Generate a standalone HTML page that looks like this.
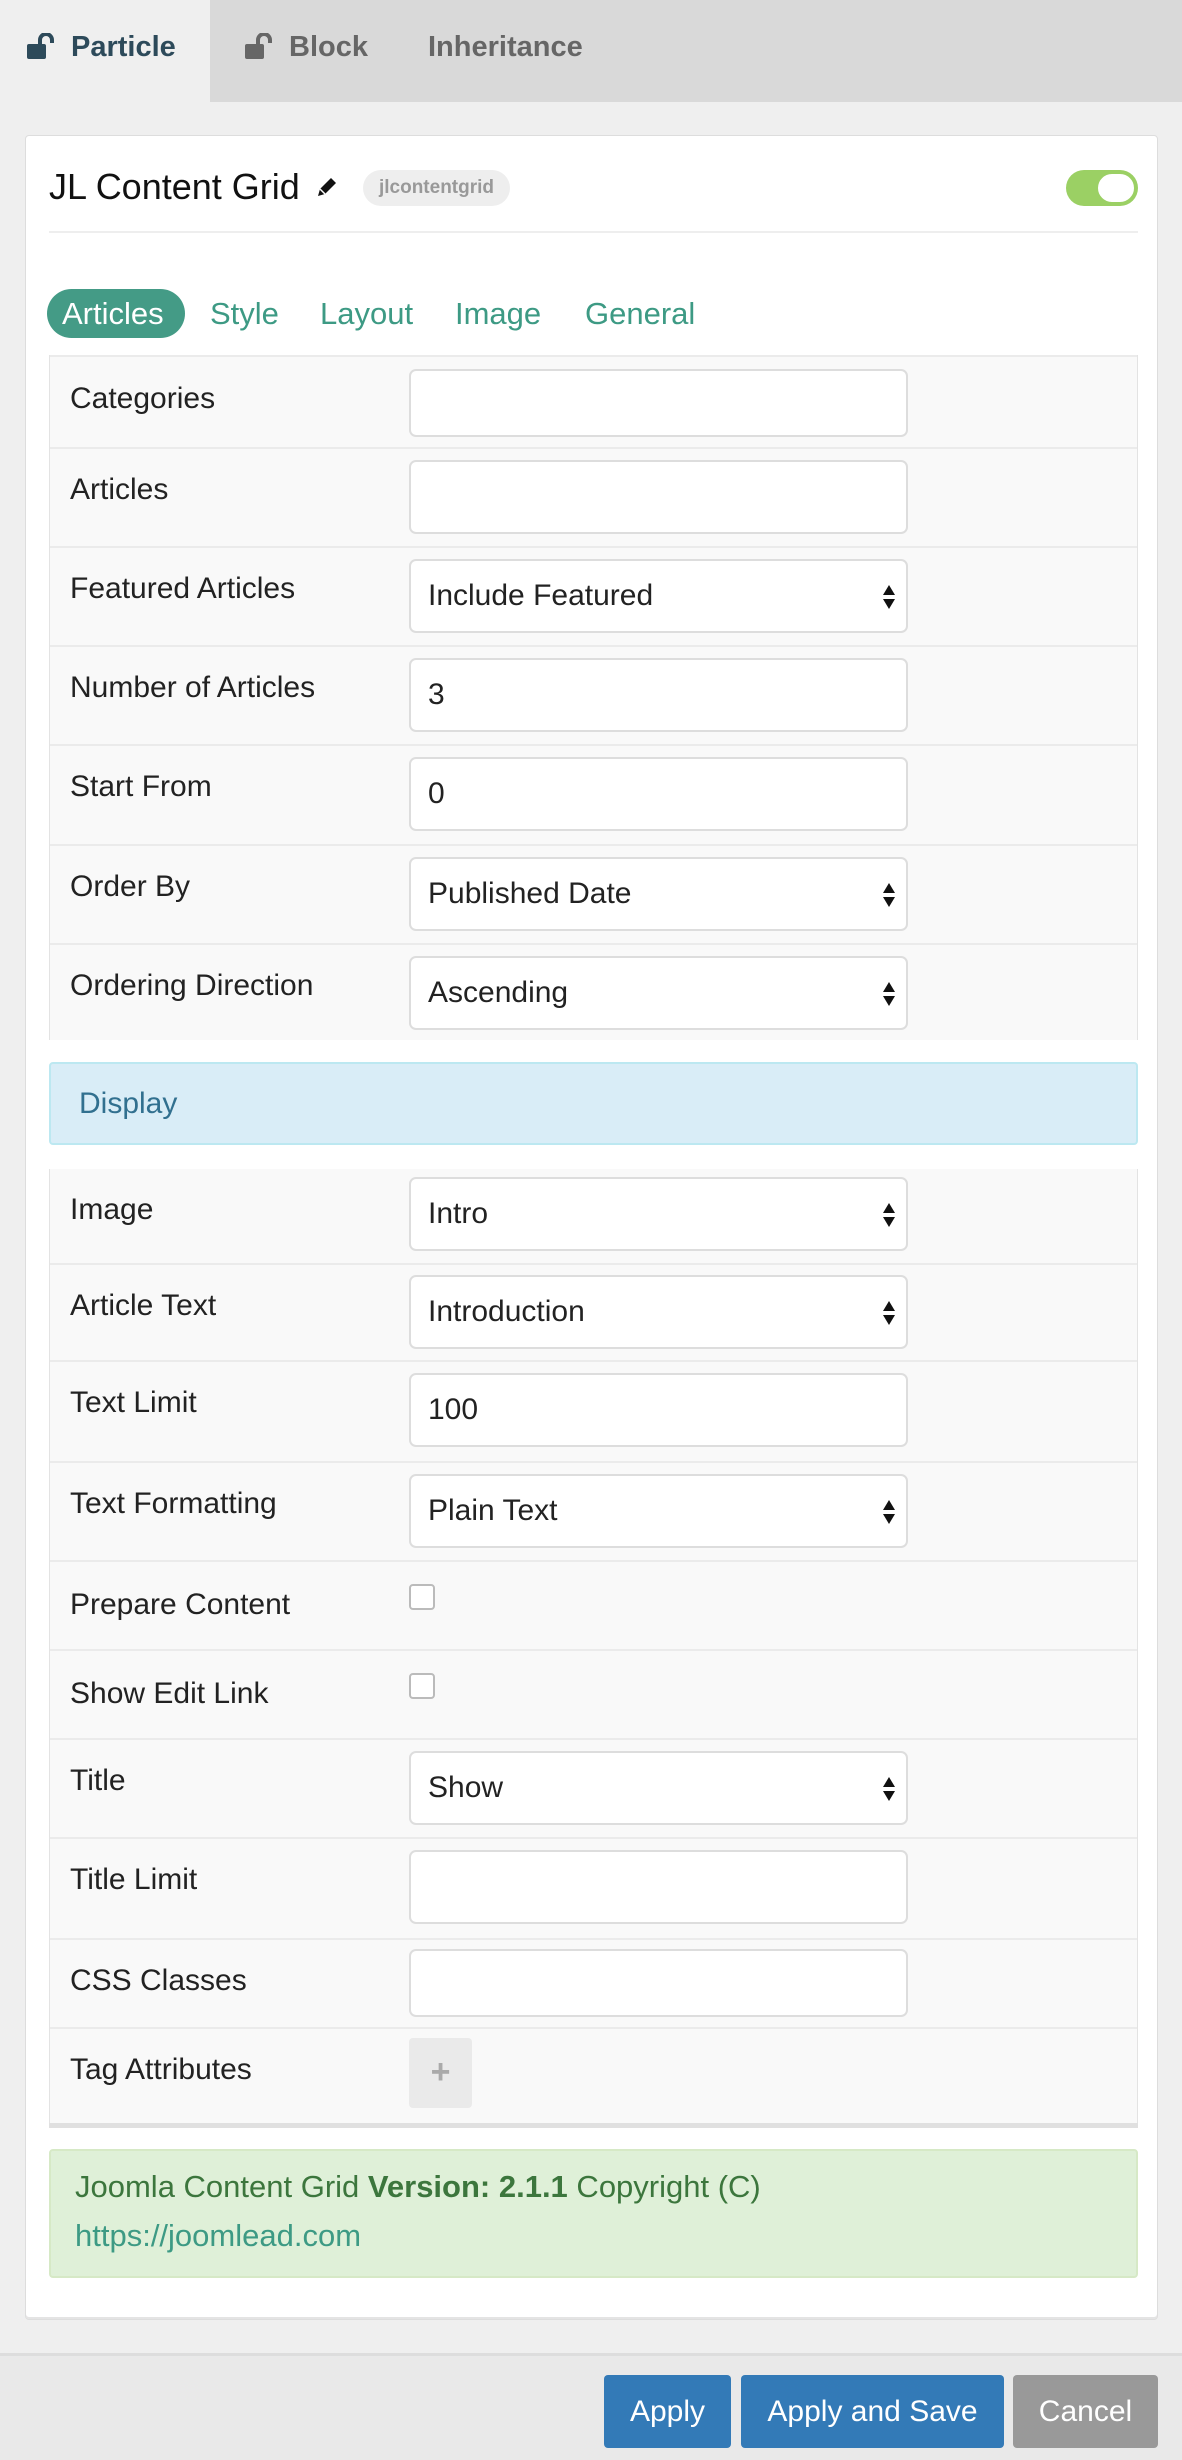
<!DOCTYPE html>
<html><head><meta charset="utf-8"><style>
*{box-sizing:border-box;margin:0;padding:0}
body{width:1182px;height:2460px;background:#efefef;font-family:"Liberation Sans",sans-serif;position:relative;overflow:hidden;color:#222}
.a{position:absolute}
.tabbar{left:0;top:0;width:1182px;height:102px;background:#d9d9d9}
.tab{top:0;height:102px;line-height:94px;font-size:29px;color:#666}
.card{left:25px;top:135px;width:1133px;height:2185px;background:#fff;border:1px solid #ddd;border-radius:4px;box-shadow:0 -2px 0 #e4e4e4 inset}
.fields{left:49px;width:1089px;background:#f9f9f9;border-left:1px solid #e3e3e3;border-right:1px solid #e3e3e3}
.row{position:absolute;left:0;width:100%;border-top:2px solid #ebebeb}
.lbl{position:absolute;left:20px;font-size:30px;color:#222}
.inp{position:absolute;left:359px;width:499px;height:74px;background:#fff;border:2px solid #ddd;border-radius:7px;font-size:30px;line-height:70px;padding-left:17px;color:#222}
.arr{position:absolute;right:10px;top:22px;width:14px;height:28px}
.cb{position:absolute;left:359px;width:26px;height:26px;border:2px solid #bbb;border-radius:4px;background:#fff}
.nav{top:289px;height:49px;line-height:49px;font-size:31px;color:#3d9a84}
.btn{top:2375px;height:73px;line-height:73px;color:#fff;font-size:30px;text-align:center;border-radius:4px}
</style></head><body>
<div class="a tabbar"></div>
<div class="a" style="left:0;top:0;width:210px;height:102px;background:#efefef"></div>
<svg class="a" style="left:27px;top:33px" width="32" height="26" viewBox="0 0 32 26"><rect x="0" y="11" width="19" height="15" rx="2" fill="#2d4a5a"/><path d="M13 12 V7 a6 6 0 0 1 12 0 V10" fill="none" stroke="#2d4a5a" stroke-width="4"/></svg>
<div class="a tab" style="left:71px;color:#2d4a5a;font-weight:bold">Particle</div>
<svg class="a" style="left:245px;top:33px" width="32" height="26" viewBox="0 0 32 26"><rect x="0" y="11" width="19" height="15" rx="2" fill="#666"/><path d="M13 12 V7 a6 6 0 0 1 12 0 V10" fill="none" stroke="#666" stroke-width="4"/></svg>
<div class="a tab" style="left:289px;font-weight:bold">Block</div>
<div class="a tab" style="left:428px;font-weight:bold">Inheritance</div>

<div class="a card"></div>
<div class="a" style="left:49px;top:164px;font-size:36px;line-height:46px;color:#111">JL Content Grid</div>
<svg class="a" style="left:315px;top:175px" width="24" height="24" viewBox="0 0 24 24"><path d="M3 21 L5 14 L16 3 L21 8 L10 19 Z" fill="#111"/><path d="M5 14 L10 19" stroke="#fff" stroke-width="1.5"/></svg>
<div class="a" style="left:363px;top:170px;width:147px;height:36px;border-radius:18px;background:#eee;color:#999;font-size:19px;font-weight:bold;line-height:36px;text-align:center">jlcontentgrid</div>
<div class="a" style="left:1066px;top:170px;width:72px;height:36px;border-radius:18px;background:#9bd064"></div>
<div class="a" style="left:1096px;top:172px;width:40px;height:32px;border-radius:16px;background:#fff;border:2px solid #9bd064"></div>
<div class="a" style="left:49px;top:231px;width:1089px;height:2px;background:#eee"></div>

<div class="a" style="left:47px;top:289px;width:138px;height:49px;border-radius:25px;background:#449b86"></div>
<div class="a nav" style="left:62px;color:#fff">Articles</div>
<div class="a nav" style="left:210px">Style</div>
<div class="a nav" style="left:320px">Layout</div>
<div class="a nav" style="left:455px">Image</div>
<div class="a nav" style="left:585px">General</div>

<div class="a fields" style="top:355px;height:685px">
 <div class="row" style="top:0;height:92px"><div class="lbl" style="top:25px">Categories</div><div class="inp" style="top:12px;height:68px"></div></div>
 <div class="row" style="top:92px;height:99px"><div class="lbl" style="top:24px">Articles</div><div class="inp" style="top:11px"></div></div>
 <div class="row" style="top:191px;height:99px"><div class="lbl" style="top:24px">Featured Articles</div><div class="inp" style="top:11px">Include Featured<svg class="arr" viewBox="0 0 14 28"><path d="M7 2 L13 12 H1Z M7 26 L13 16 H1Z" fill="#111"/></svg></div></div>
 <div class="row" style="top:290px;height:99px"><div class="lbl" style="top:24px">Number of Articles</div><div class="inp" style="top:11px">3</div></div>
 <div class="row" style="top:389px;height:100px"><div class="lbl" style="top:24px">Start From</div><div class="inp" style="top:11px">0</div></div>
 <div class="row" style="top:489px;height:99px"><div class="lbl" style="top:24px">Order By</div><div class="inp" style="top:11px">Published Date<svg class="arr" viewBox="0 0 14 28"><path d="M7 2 L13 12 H1Z M7 26 L13 16 H1Z" fill="#111"/></svg></div></div>
 <div class="row" style="top:588px;height:97px"><div class="lbl" style="top:24px">Ordering Direction</div><div class="inp" style="top:11px">Ascending<svg class="arr" viewBox="0 0 14 28"><path d="M7 2 L13 12 H1Z M7 26 L13 16 H1Z" fill="#111"/></svg></div></div>
</div>
<div class="a" style="left:49px;top:1040px;width:1089px;height:22px;background:#fff"></div>
<div class="a" style="left:49px;top:1062px;width:1089px;height:83px;background:#d9edf7;border:2px solid #bce8f1;border-radius:4px;color:#31708f;font-size:30px;line-height:79px;padding-left:28px">Display</div>

<div class="a fields" style="top:1169px;height:956px">
 <div class="row" style="top:0;height:94px;border-top:none"><div class="lbl" style="top:24px">Image</div><div class="inp" style="top:8px">Intro<svg class="arr" viewBox="0 0 14 28"><path d="M7 2 L13 12 H1Z M7 26 L13 16 H1Z" fill="#111"/></svg></div></div>
 <div class="row" style="top:94px;height:97px"><div class="lbl" style="top:24px">Article Text</div><div class="inp" style="top:10px">Introduction<svg class="arr" viewBox="0 0 14 28"><path d="M7 2 L13 12 H1Z M7 26 L13 16 H1Z" fill="#111"/></svg></div></div>
 <div class="row" style="top:191px;height:101px"><div class="lbl" style="top:24px">Text Limit</div><div class="inp" style="top:11px">100</div></div>
 <div class="row" style="top:292px;height:99px"><div class="lbl" style="top:24px">Text Formatting</div><div class="inp" style="top:11px">Plain Text<svg class="arr" viewBox="0 0 14 28"><path d="M7 2 L13 12 H1Z M7 26 L13 16 H1Z" fill="#111"/></svg></div></div>
 <div class="row" style="top:391px;height:89px"><div class="lbl" style="top:26px">Prepare Content</div><div class="cb" style="top:22px"></div></div>
 <div class="row" style="top:480px;height:89px"><div class="lbl" style="top:26px">Show Edit Link</div><div class="cb" style="top:22px"></div></div>
 <div class="row" style="top:569px;height:99px"><div class="lbl" style="top:24px">Title</div><div class="inp" style="top:11px">Show<svg class="arr" viewBox="0 0 14 28"><path d="M7 2 L13 12 H1Z M7 26 L13 16 H1Z" fill="#111"/></svg></div></div>
 <div class="row" style="top:668px;height:101px"><div class="lbl" style="top:24px">Title Limit</div><div class="inp" style="top:11px"></div></div>
 <div class="row" style="top:769px;height:89px"><div class="lbl" style="top:24px">CSS Classes</div><div class="inp" style="top:9px;height:68px"></div></div>
 <div class="row" style="top:858px;height:98px"><div class="lbl" style="top:24px">Tag Attributes</div><div class="a" style="left:359px;top:9px;width:63px;height:70px;background:#eaeaea;border-radius:4px;color:#aaa;font-size:34px;font-weight:bold;text-align:center;line-height:68px">+</div></div>
</div>
<div class="a" style="left:49px;top:2123px;width:1089px;height:5px;background:#e0e0e0"></div>

<div class="a" style="left:49px;top:2149px;width:1089px;height:129px;background:#dff0d8;border:2px solid #d6e9c6;border-radius:4px"></div>
<div class="a" style="left:75px;top:2167px;font-size:31px;color:#3c763d;line-height:40px">Joomla Content Grid <b>Version: 2.1.1</b> Copyright (C)</div>
<div class="a" style="left:75px;top:2216px;font-size:31px;color:#3d9a84;line-height:40px">https://joomlead.com</div>

<div class="a" style="left:0;top:2353px;width:1182px;height:107px;background:#e9e9e9;border-top:3px solid #ddd"></div>
<div class="a btn" style="left:604px;width:127px;background:#337ab7">Apply</div>
<div class="a btn" style="left:741px;width:263px;background:#337ab7">Apply and Save</div>
<div class="a btn" style="left:1013px;width:145px;background:#999">Cancel</div>
</body></html>
